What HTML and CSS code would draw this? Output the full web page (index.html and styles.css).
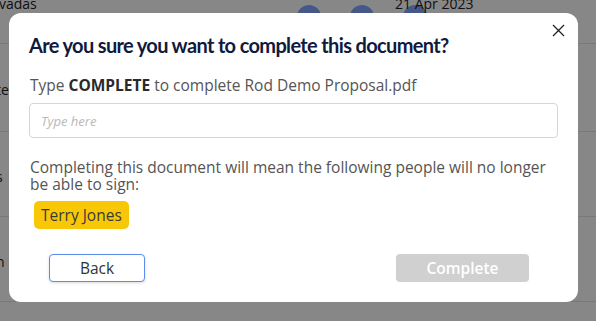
FILE: index.html
```html
<!DOCTYPE html>
<html lang="en">
<head>
<meta charset="utf-8">
<title>Complete document</title>
<link rel="stylesheet" href="styles.css">
</head>
<body>
<div class="page">
  <div class="row first">
    <span class="cell-name">vadas</span>
    <span class="avatars"><i class="av"></i><i class="av"></i><i class="av"></i></span>
    <span class="cell-date">21 Apr 2023</span>
  </div>
  <div class="row second"><span class="cell-name">te</span></div>
  <div class="row third"><span class="cell-name">s</span></div>
  <div class="row fourth"><span class="cell-name">n</span></div>
</div>
<div class="overlay"></div>
<div class="modal" role="dialog">
  <button class="close" aria-label="Close">
    <svg width="13" height="13" viewBox="0 0 13 13"><path d="M1 1L12 12M12 1L1 12" stroke="#222" stroke-width="1.3" fill="none"/></svg>
  </button>
  <h1 class="title">Are you sure you want to complete this document?</h1>
  <p class="prompt">Type <b>COMPLETE</b> to complete Rod Demo Proposal.pdf</p>
  <input class="field" type="text" placeholder="Type here">
  <p class="note">Completing this document will mean the following people will no longer be able to sign:</p>
  <div class="chips"><span class="chip">Terry Jones</span></div>
  <div class="actions">
    <button class="btn back">Back</button>
    <button class="btn complete" disabled>Complete</button>
  </div>
</div>
</body>
</html>
```
FILE: styles.css
```css
html, body {
  margin: 0;
  padding: 0;
}
body {
  width: 596px;
  height: 321px;
  overflow: hidden;
  background: #fff;
  font-family: "Open Sans", "Noto Sans", sans-serif;
  position: relative;
}
.page {
  margin-top: -42px;
}
.row {
  border-bottom: 1px solid #e2e2e2;
  display: flex;
  align-items: center;
  position: relative;
  font-size: 14px;
  color: #222;
  padding-top: 5px;
  box-sizing: border-box;
}
.row.first {
  height: 86px;
  align-items: flex-start;
  padding-top: 36px;
}
.row.second { height: 88px; }
.row.third { height: 85px; }
.row.fourth { height: 85px; }
.cell-name {
  margin-left: -4px;
  line-height: 20px;
}
.first .cell-name {
  margin-left: -1px;
}
.avatars {
  position: absolute;
  left: 297px;
  top: 47px;
  display: flex;
  gap: 29px;
}
.av {
  width: 24px;
  height: 24px;
  border-radius: 50%;
  background: #82a6ff;
  display: block;
}
.cell-date {
  position: absolute;
  left: 395px;
  top: 36px;
  line-height: 20px;
  color: #222;
}
.overlay {
  position: absolute;
  inset: 0;
  background: rgba(0, 0, 0, 0.47);
}
.modal {
  position: absolute;
  left: 9px;
  top: 13px;
  width: 569px;
  height: 289px;
  box-sizing: border-box;
  background: #fff;
  border-radius: 12px;
  padding: 20px 20px 0 20px;
  font-family: "Open Sans", "Noto Sans", sans-serif;
  color: #555;
}
.close {
  position: absolute;
  right: 13px;
  top: 11px;
  border: 0;
  background: none;
  padding: 0;
  width: 13px;
  height: 13px;
  display: block;
}
.close svg { display: block; }
.title {
  margin: 0;
  font-family: "Lato", "Open Sans", sans-serif;
  font-size: 20px;
  font-weight: 700;
  letter-spacing: -0.65px;
  color: #101a3c;
  line-height: 24px;
}
.prompt {
  margin: 18px 0 0 1px;
  font-size: 15.5px;
  line-height: 20px;
}
.prompt b { color: #2a2a2a; }
.field {
  display: block;
  margin-top: 8px;
  width: 529px;
  height: 35px;
  box-sizing: border-box;
  border: 1px solid #d6d6d6;
  border-radius: 4px;
  padding: 0 11px;
  font-family: inherit;
  font-size: 13px;
  outline: none;
}
.field::placeholder {
  color: #b8b8b8;
  font-style: italic;
}
.note {
  margin: 21px 0 0 1px;
  max-width: 520px;
  font-size: 15.5px;
  line-height: 17px;
}
.chips {
  margin-top: 8px;
  padding-left: 5px;
  display: flex;
}
.chip {
  background: #f8c808;
  border-radius: 5px;
  padding: 0 7px;
  height: 28px;
  line-height: 28px;
  font-size: 15.5px;
  color: #3a3a3a;
}
.actions {
  margin-top: 25px;
  display: flex;
  justify-content: space-between;
  padding: 0 29px 0 20px;
}
.btn {
  height: 28px;
  border-radius: 4px;
  font-family: inherit;
  font-size: 15.5px;
  padding: 0;
}
.back {
  width: 96px;
  background: #fff;
  border: 1px solid #5b8def;
  color: #333;
  box-shadow: 0 1px 3px rgba(0,0,0,0.15);
}
.complete {
  width: 133px;
  background: #d0d0d0;
  border: 0;
  color: #fff;
  font-weight: 600;
}
```
